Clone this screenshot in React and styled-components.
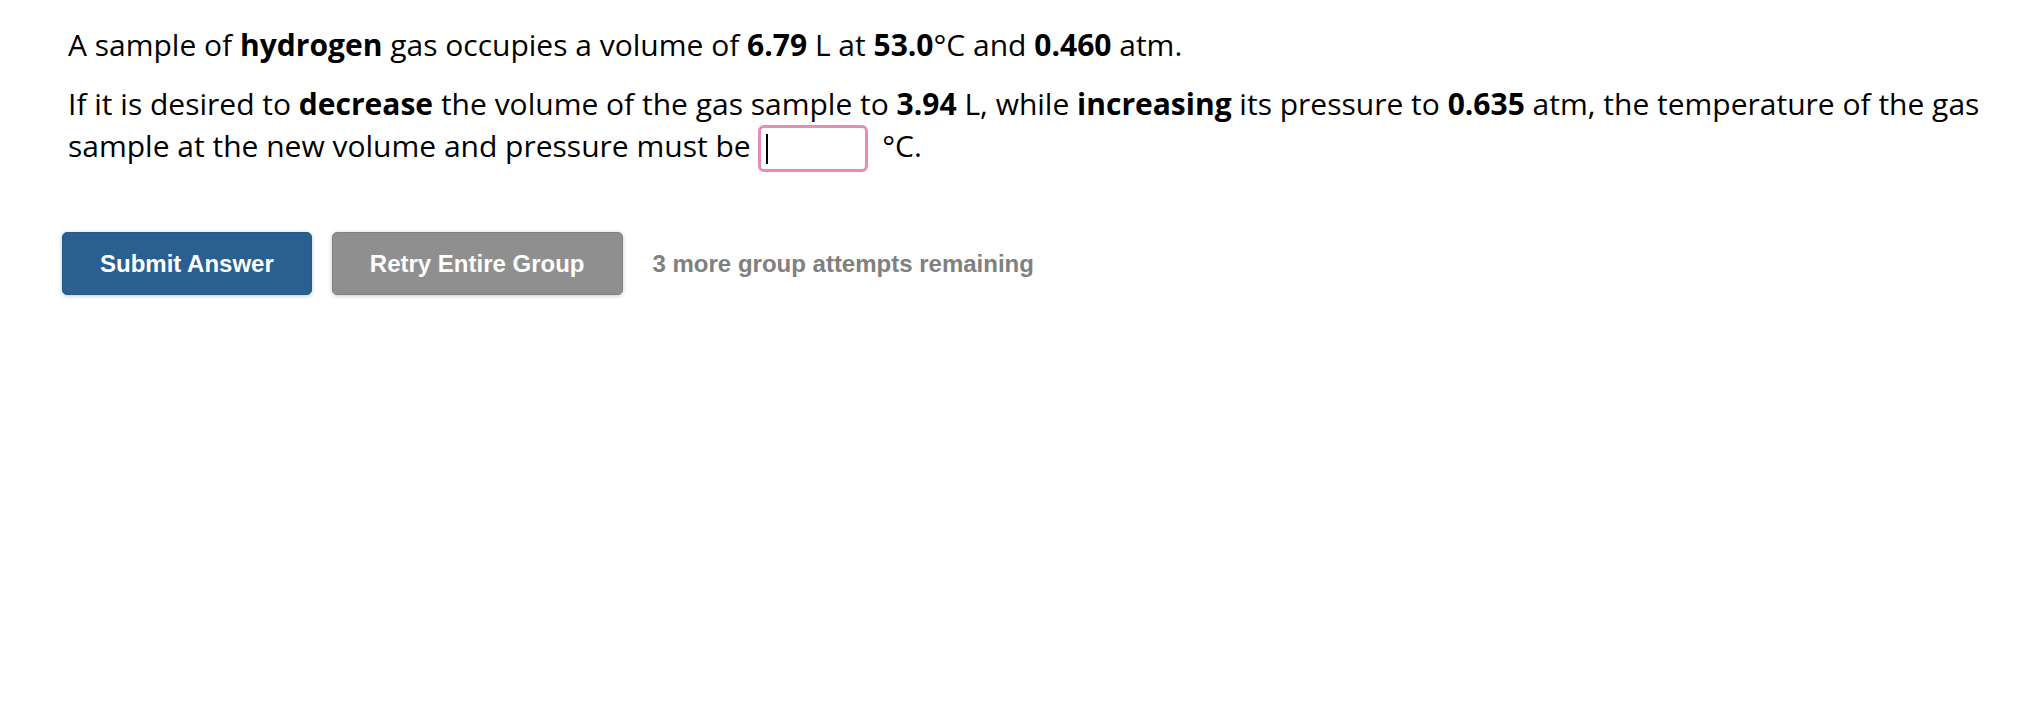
import React from "react";
import styled, { createGlobalStyle } from "styled-components";

const GlobalStyle = createGlobalStyle`
  html, body {
    margin: 0;
    padding: 0;
    background: #ffffff;
  }
  * { box-sizing: border-box; }
`;

const Page = styled.main`
  padding: 24px 0 0 68px;
  width: 2044px;
  min-height: 728px;
  background: #ffffff;
`;

const Question = styled.section`
  width: 1932px;
  font-family: "Open Sans", "Noto Sans", sans-serif;
  font-size: 30px;
  line-height: 42px;
  color: #000000;
`;

const Para = styled.p`
  margin: 0 0 17px;
  &:last-child { margin-bottom: 0; }
`;

const B = styled.strong`
  font-weight: 700;
`;

const AnswerBox = styled.span`
  display: inline-flex;
  align-items: center;
  width: 110px;
  height: 47px;
  margin: 0 6px 0 0;
  padding-left: 5px;
  border: 3px solid #e88bb6;
  border-radius: 6px;
  background: #ffffff;
  vertical-align: middle;
`;

const Caret = styled.span`
  display: block;
  width: 2px;
  height: 30px;
  background: #000000;
`;

const ButtonRow = styled.div`
  display: flex;
  align-items: center;
  gap: 20px;
  margin: 60px 0 0 -6px;
  font-family: "Liberation Sans", Arial, Helvetica, sans-serif;
  font-weight: 700;
  font-size: 24px;
`;

const Button = styled.button`
  height: 63px;
  padding: 0 37px;
  border: 1px solid ${(p) => (p.$variant === "primary" ? "#275a89" : "#828282")};
  border-radius: 5px;
  background: ${(p) => (p.$variant === "primary" ? "#2a5f91" : "#8f8f8f")};
  color: #ffffff;
  font-family: inherit;
  font-weight: 700;
  font-size: 24px;
  box-shadow: 0 1px 4px rgba(0, 0, 0, 0.22);
  cursor: pointer;
`;

const Status = styled.span`
  margin-left: 10px;
  color: #808080;
`;

export default function App() {
  return (
    <>
      <GlobalStyle />
      <Page>
        <Question>
          <Para>
            A sample of <B>hydrogen</B> gas occupies a volume of <B>6.79</B> L at{" "}
            <B>53.0</B>°C and <B>0.460</B> atm.
          </Para>
          <Para>
            If it is desired to <B>decrease</B> the volume of the gas sample to{" "}
            <B>3.94</B> L, while <B>increasing</B> its pressure to <B>0.635</B> atm,
            the temperature of the gas sample at the new volume and pressure must be{" "}
            <AnswerBox>
              <Caret />
            </AnswerBox>{" "}
            °C.
          </Para>
        </Question>
        <ButtonRow>
          <Button $variant="primary">Submit Answer</Button>
          <Button $variant="secondary">Retry Entire Group</Button>
          <Status>3 more group attempts remaining</Status>
        </ButtonRow>
      </Page>
    </>
  );
}
